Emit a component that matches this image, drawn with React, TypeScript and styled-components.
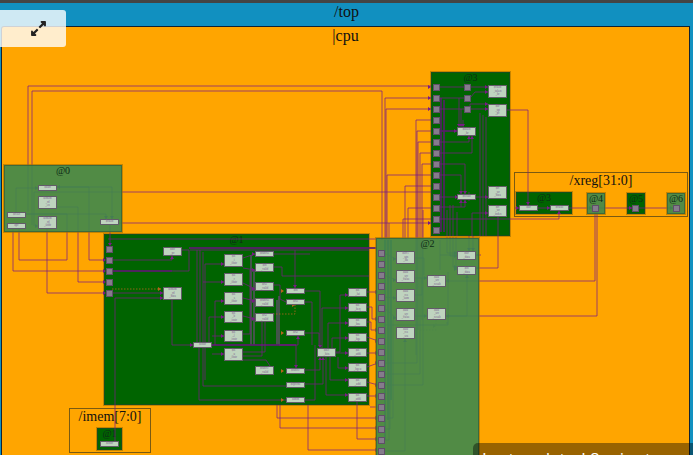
import { createGlobalStyle, styled } from 'styled-components';
import { FaExpandAlt } from 'react-icons/fa';

// page position of the orange panel's inside, diagram data below is in page pixels
const OX = 2;
const OY = 27;

const GlobalStyle = createGlobalStyle`
    html, body {
        margin: 0;
        height: 100%;
        overflow: hidden;
    }
    #root {
        height: 100%;
    }
`;

const Frame = styled.div`
    position: relative;
    display: flex;
    flex-direction: column;
    width: 693px;
    height: 455px;
    box-sizing: border-box;
    overflow: hidden;
    background: #1190c0;
    border-top: 3px solid #444;
    font-family: 'Liberation Serif', serif;
    color: #111;
`;

const TopTitle = styled.div`
    height: 23px;
    line-height: 18px;
    text-align: center;
    font-size: 16px;
`;

const Panel = styled.div`
    position: relative;
    flex: 1;
    margin: 0 3px 0 1px;
    background: #ffa500;
    border: 1px solid #123;
    border-bottom: none;
    border-radius: 3px 0 0 0;
    box-sizing: border-box;
`;

const CpuTitle = styled.div`
    text-align: center;
    font-size: 16px;
    line-height: 18px;
`;

const ExpandButton = styled.button`
    position: absolute;
    left: 0;
    top: 7px;
    width: 66px;
    height: 37px;
    padding: 0 0 0 10px;
    border: none;
    border-radius: 0 3px 3px 0;
    background: rgba(255, 255, 255, 0.8);
    color: #222;
    display: flex;
    align-items: center;
    justify-content: center;
    z-index: 9;
`;

const Toast = styled.div`
    position: absolute;
    left: 473px;
    top: 440px;
    width: 240px;
    height: 40px;
    padding: 6px 0 0 9px;
    box-sizing: border-box;
    border-radius: 5px 0 0 0;
    background: rgba(0, 0, 0, 0.4);
    color: #fff;
    font-family: 'Open Sans', sans-serif;
    font-size: 17px;
    line-height: 20px;
    white-space: nowrap;
    z-index: 9;
`;

const Wires = styled.svg<{ $z: number }>`
    position: absolute;
    left: ${-OX}px;
    top: ${-OY}px;
    z-index: ${(p) => p.$z};
    pointer-events: none;
`;

type Box = { $x: number; $y: number; $w: number; $h: number };

const Placed = styled.div<Box>`
    position: absolute;
    left: ${(p) => p.$x - OX}px;
    top: ${(p) => p.$y - OY}px;
    width: ${(p) => p.$w}px;
    height: ${(p) => p.$h}px;
    box-sizing: border-box;
`;

const Scope = styled(Placed)`
    border: 1.5px solid #7a5a12;
    text-align: center;
    font-size: 14px;
    line-height: 15px;
`;

const Stage = styled(Placed)<{ $light?: boolean }>`
    z-index: ${(p) => (p.$light ? 2 : 0)};
    background: ${(p) => (p.$light ? 'rgba(62, 136, 76, 0.9)' : '#006400')};
    border: 1px solid ${(p) => (p.$light ? '#3c6a3c' : '#14501c')};
    outline: 1px solid rgba(160, 110, 0, 0.6);
    text-align: center;
    font-size: 10px;
    line-height: 10px;
    color: #0d2a16;
`;

const Cell = styled(Placed)`
    z-index: 3;
    display: flex;
    align-items: center;
    justify-content: center;
    text-align: center;
    background: #bfd4bf;
    border: 1px solid #625c68;
    color: #7d5f8e;
    font-size: 3px;
    line-height: 3.4px;
    white-space: pre;
`;

const Port = styled(Placed)`
    z-index: 3;
    background: #857c8c;
    border: 1px solid #5f4f68;
`;

const stages: [string, number, number, number, number, boolean][] = [
    ['@1', 104, 234, 265, 171, false],
    ['@3', 431, 72, 79, 164, false],
    ['@3', 516, 192, 56, 22, false],
    ['@5', 627, 193, 18, 21, false],
    ['@1', 97, 428, 25, 22, false],
    ['@0', 4, 165, 118, 67, true],
    ['@2', 376, 238, 103, 230, true],
    ['@4', 587, 193, 18, 21, true],
    ['@6', 667, 193, 18, 21, true],
];

const cells: [string, number, number, number, number][] = [
    // @0
    ['$start', 38, 185, 19, 6],
    ['$imem\n_rd\n_en', 38, 196, 19, 13],
    ['$imem\n_rd\n_addr', 38, 216, 19, 13],
    ['$reset', 7, 212, 19, 6],
    ['$pc', 7, 223, 19, 6],
    ['$valid', 100, 219, 19, 6],
    // @1
    ['$inc\n_pc', 163, 247, 19, 9],
    ['$imem\n_rd\n_data', 163, 287, 19, 13],
    ['$is\n_i\n_instr', 224, 254, 19, 13],
    ['$is\n_r\n_instr', 224, 273, 19, 13],
    ['$is\n_s\n_instr', 224, 292, 19, 13],
    ['$is\n_b\n_instr', 224, 311, 19, 12],
    ['$is\n_j\n_instr', 224, 330, 19, 12],
    ['$is\n_u\n_instr', 224, 348, 19, 13],
    ['$funct3', 255, 251, 19, 6],
    ['$rd\n_valid', 255, 263, 19, 9],
    ['$rs1\n_valid', 255, 282, 19, 9],
    ['$funct3\n_valid', 255, 298, 19, 9],
    ['$rs2\n_valid', 255, 313, 19, 9],
    ['$funct7\n_valid', 255, 366, 19, 9],
    ['$rd', 286, 288, 19, 6],
    ['$rs1', 286, 299, 19, 6],
    ['$rs2', 286, 330, 19, 6],
    ['$funct7', 286, 368, 19, 6],
    ['$opcode', 286, 382, 19, 6],
    ['$imm', 286, 397, 19, 6],
    ['$instr', 193, 342, 19, 6],
    ['$dec\n_bits', 317, 348, 19, 9],
    ['$is\n_lui', 348, 288, 19, 9],
    ['$is\n_beq', 348, 303, 19, 9],
    ['$is\n_bne', 348, 318, 19, 9],
    ['$is\n_bge', 348, 333, 19, 9],
    ['$is\n_addi', 348, 348, 19, 9],
    ['$is\n_bgeu', 348, 363, 19, 9],
    ['$is\n_add', 348, 378, 19, 9],
    ['$is\n_addi', 348, 393, 19, 9],
    // @2
    ['$src1\n_sgn\n_ltu', 396, 251, 19, 13],
    ['$alu\n_src\n_value', 396, 270, 19, 13],
    ['$alu\n_res\n_sum', 396, 289, 19, 13],
    ['$alu\n_src\n_value', 396, 308, 19, 13],
    ['$alu\n_res\n_sra', 396, 327, 19, 12],
    ['$alu\n_src\n_result', 427, 275, 19, 12],
    ['$alu\n_src\n_result', 427, 308, 19, 12],
    ['$wr\n_data', 457, 251, 19, 9],
    ['$rd\n_data', 457, 266, 19, 9],
    // @3
    ['$valid\n_taken\n_br', 488, 85, 19, 13],
    ['$br\n_tgt\n_pc', 488, 104, 19, 13],
    ['$taken\n_br', 457, 127, 19, 9],
    ['$result', 457, 194, 19, 6],
    ['$rf\n_wr\n_data', 488, 186, 19, 13],
    ['$rf\n_wr\n_index', 488, 205, 19, 12],
    // xreg, imem
    ['$wr', 519, 205, 19, 6],
    ['$value', 550, 205, 19, 6],
    ['$instr', 100, 441, 19, 6],
];

const ports: [number, number][] = [
    ...[249, 260, 271, 282, 293].map((y): [number, number] => [109, y]),
    ...[87, 98, 109, 120, 131, 142, 153, 164, 175, 186, 197, 208, 219, 230].map(
        (y): [number, number] => [436, y],
    ),
    [467, 87],
    [467, 98],
    [467, 109],
    ...[253, 264, 275, 286, 297, 308, 319, 330, 341, 352, 363, 374, 385, 396, 407, 418, 429, 440, 451].map(
        (y): [number, number] => [381, y],
    ),
    [595, 208],
    [635, 208],
    [676, 208],
];

// heavy bundles
const buses = [
    '189,248 376,248',
    '193,345 296,345',
    '109,271 172,271',
    '436,131 457,131',
    '441,98 441,232',
    '444,100 444,232',
];

// the wide gray trunks inside @1 and @2
const trunks = [
    '251,255 251,345',
    '254,270 254,345',
    '277,300 277,345',
    '279,296 279,345',
    '385,240 385,440',
    '388,240 388,420',
    '391,240 391,400',
];

// undriven, dotted signals
const dotted = ['112,289 161,289', '273,314 295,314 295,305', '418,283 418,288', '420,330 437,330', '436,320 436,326'];

const lines = [
    // left block and the long runs over the top
    '28,212 28,86 431,86',
    '32,225 32,91 382,91 382,240',
    '16,212 16,188 38,188',
    '57,187 89,187 89,260 104,260',
    '34,226 34,192 431,192',
    '26,214 67,214 67,260 19,260 19,229',
    '13,229 13,271 104,271',
    '26,214 106,214 106,219',
    '47,229 47,293 104,293',
    '119,223 431,223',
    '57,187 112,187 112,219',
    '110,225 110,243',
    '108,239 376,239',
    '57,207 78,207 78,282 104,282',
    // @1 inputs
    '112,260 172,260 172,256',
    '172,271 189,271 189,250',
    '112,293 163,293',
    '115,298 163,298',
    '115,298 115,441',
    '172,300 172,345 193,345',
    '182,250 189,250',
    '190,250 369,250',
    '197,250 197,345',
    '200,250 200,345',
    '203,252 203,386 286,386',
    '205,264 224,264',
    '205,264 205,380',
    '203,282 224,282',
    '215,301 224,301',
    '215,301 215,345',
    '209,317 224,317',
    '209,317 209,345',
    '199,345 199,400 286,400',
    '212,354 224,354',
    '212,336 224,336',
    // @1 decoders
    '243,258 255,254',
    '243,268 255,270',
    '243,283 255,289',
    '243,298 255,301',
    '243,316 255,319',
    '243,334 250,334 250,270',
    '243,356 262,356 262,322',
    '243,352 265,352 265,322',
    '243,360 266,360 270,366',
    '274,254 310,254',
    '274,267 282,267 282,276 369,276',
    '274,285 280,285 280,299 286,302',
    '295,250 295,288',
    '279,345 298,345 298,336',
    '296,345 296,368',
    '305,333 319,333 319,345',
    '305,302 312,302 312,345',
    '305,291 320,291 320,345',
    '305,370 320,370 320,358',
    '305,384 323,384 323,358',
    '305,400 315,400 315,345',
    '336,352 340,352 340,295 348,295',
    '322,348 322,308 348,308',
    '328,348 328,323 348,323',
    '332,348 332,338 348,338',
    '336,353 348,353',
    '338,357 338,368 348,368',
    '330,357 330,380 348,380',
    '326,357 326,395 348,395',
    // @1 outputs to @2
    '367,292 376,292',
    '367,307 372,307 372,319 378,319',
    '367,322 371,322 371,330 378,330',
    '367,337 378,341',
    '367,353 378,353',
    '367,367 378,363',
    '367,382 378,385',
    '367,396 378,396',
    '370,407 378,407',
    '277,405 277,418 378,418',
    '280,405 280,428 378,428',
    '357,402 357,439 378,439',
    '308,405 308,450 378,450',
    // @3 to @2 and @1
    '431,98 385,98 385,240',
    '431,109 386,109 386,238',
    '431,120 416,120 416,355',
    '431,131 417,131 417,363 384,363',
    '431,142 418,142 418,330',
    '431,153 420,153 420,374 384,374',
    '431,164 422,164 422,320',
    '431,175 387,175 387,250',
    '431,186 405,186 405,238',
    '431,208 408,208 408,238',
    '423,210 423,385 384,385',
    '389,223 389,300',
    '431,219 403,219 403,238',
    // @2
    '384,253 396,259',
    '384,275 396,280',
    '384,297 396,298',
    '384,308 396,318',
    '384,418 393,418 393,320',
    '384,429 390,429 390,300',
    '384,440 389,440 389,320',
    '384,451 405,451 405,339',
    '384,325 448,325 448,272',
    '415,258 424,258 424,275',
    '415,278 427,278',
    '415,295 422,295 422,278',
    '415,316 427,316',
    '440,240 440,270',
    '446,316 467,316 467,275',
    '446,323 448,323',
    '447,237 447,253 457,253',
    '450,237 450,256 457,256',
    '453,237 453,267 457,267',
    '456,237 456,269 457,269',
    '440,255 457,255',
    '469,236 469,251',
    '473,236 473,251',
    '476,255 481,255',
    '476,268 498,268 498,217',
    // @3 insides
    '439,87 488,87',
    '439,98 470,98 475,92 488,92',
    '439,109 488,109',
    '470,109 470,104 488,104',
    '459,98 459,125',
    '461,109 461,125',
    '463,120 463,125',
    '439,142 469,142 469,136',
    '439,153 472,153 472,136',
    '439,164 465,164 465,194',
    '439,175 461,175 461,194',
    '439,197 458,197',
    '439,207 465,207 465,200',
    '461,200 461,207',
    '476,197 488,197',
    '472,213 488,213',
    '472,213 472,236',
    '480,113 480,236',
    '483,115 483,236',
    '486,117 486,236',
    '447,210 447,236',
    '450,205 450,236',
    '453,205 453,236',
    '457,212 457,236',
    '507,110 528,110 528,205',
    '438,219 559,219 559,211',
    // xreg
    '538,208 550,208',
    '569,208 595,208',
    '598,208 632,208',
    '638,208 673,208',
    '515,208 519,208',
    '595,211 595,281 446,281',
    '597,211 597,316 446,316',
    '469,201 469,192',
];

// each entry is [tip x, tip y, direction] for the small heads that enter a cell
const heads: [number, number, 'r' | 'l' | 'd' | 'u'][] = [
    [57, 187, 'l'],
    [38, 188, 'r'],
    [38, 226, 'r'],
    [47, 216, 'u'],
    [112, 219, 'd'],
    [106, 219, 'd'],
    [110, 246, 'd'],
    [106, 260, 'r'],
    [106, 271, 'r'],
    [106, 282, 'r'],
    [106, 293, 'r'],
    [172, 256, 'u'],
    [163, 293, 'r'],
    [163, 298, 'r'],
    [193, 345, 'r'],
    [224, 264, 'r'],
    [224, 282, 'r'],
    [224, 301, 'r'],
    [224, 317, 'r'],
    [224, 336, 'r'],
    [224, 354, 'r'],
    [255, 254, 'r'],
    [255, 270, 'r'],
    [255, 289, 'r'],
    [255, 301, 'r'],
    [255, 319, 'r'],
    [295, 288, 'd'],
    [296, 368, 'd'],
    [298, 336, 'u'],
    [320, 348, 'd'],
    [320, 357, 'u'],
    [323, 357, 'u'],
    [348, 295, 'r'],
    [348, 308, 'r'],
    [348, 323, 'r'],
    [348, 338, 'r'],
    [348, 353, 'r'],
    [348, 368, 'r'],
    [348, 380, 'r'],
    [348, 395, 'r'],
    [378, 292, 'r'],
    [378, 319, 'r'],
    [378, 330, 'r'],
    [378, 341, 'r'],
    [378, 353, 'r'],
    [378, 363, 'r'],
    [378, 385, 'r'],
    [378, 396, 'r'],
    [378, 418, 'r'],
    [378, 428, 'r'],
    [378, 439, 'r'],
    [378, 450, 'r'],
    [396, 259, 'r'],
    [396, 280, 'r'],
    [396, 298, 'r'],
    [396, 318, 'r'],
    [405, 339, 'u'],
    [427, 278, 'r'],
    [427, 316, 'r'],
    [446, 281, 'l'],
    [446, 316, 'l'],
    [457, 253, 'r'],
    [457, 256, 'r'],
    [457, 267, 'r'],
    [457, 269, 'r'],
    [469, 251, 'd'],
    [473, 251, 'd'],
    [476, 255, 'l'],
    [476, 268, 'l'],
    [467, 275, 'u'],
    [431, 87, 'r'],
    [431, 98, 'r'],
    [431, 109, 'r'],
    [431, 223, 'r'],
    [488, 87, 'r'],
    [488, 92, 'r'],
    [488, 104, 'r'],
    [488, 109, 'r'],
    [459, 127, 'd'],
    [461, 127, 'd'],
    [463, 127, 'd'],
    [457, 131, 'r'],
    [469, 136, 'u'],
    [472, 136, 'u'],
    [461, 194, 'd'],
    [465, 194, 'd'],
    [461, 200, 'u'],
    [465, 200, 'u'],
    [458, 197, 'r'],
    [488, 197, 'r'],
    [488, 213, 'r'],
    [528, 205, 'd'],
    [559, 211, 'u'],
    [519, 208, 'r'],
    [550, 208, 'r'],
    [592, 208, 'r'],
    [632, 208, 'r'],
    [673, 208, 'r'],
];

// the little brown stubs on cells whose input is not driven
const stubs: [number, number][] = [
    [161, 289],
    [284, 291],
    [284, 333],
    [284, 371],
    [284, 400],
    [295, 305],
    [424, 285],
    [436, 326],
];

const headPoints = (x: number, y: number, dir: string) => {
    if (dir === 'r') return `${x},${y} ${x - 3},${y - 2} ${x - 3},${y + 2}`;
    if (dir === 'l') return `${x},${y} ${x + 3},${y - 2} ${x + 3},${y + 2}`;
    if (dir === 'd') return `${x},${y} ${x - 2},${y - 3} ${x + 2},${y - 3}`;
    return `${x},${y} ${x - 2},${y + 3} ${x + 2},${y + 3}`;
};

export default function App() {
    return (
        <Frame>
            <GlobalStyle />
            <TopTitle>/top</TopTitle>
            <ExpandButton aria-label="expand">
                <FaExpandAlt size={17} />
            </ExpandButton>
            <Panel>
                <CpuTitle>|cpu</CpuTitle>
                <Scope $x={514} $y={172} $w={174} $h={45}>
                    /xreg[31:0]
                </Scope>
                <Scope $x={69} $y={408} $w={82} $h={45}>
                    /imem[7:0]
                </Scope>
                {stages.map(([label, x, y, w, h, light], i) => (
                    <Stage key={i} $x={x} $y={y} $w={w} $h={h} $light={light}>
                        {label}
                    </Stage>
                ))}
                <Wires $z={1} width={693} height={455} viewBox="0 0 693 455" fill="none">
                    {trunks.map((points, i) => (
                        <polyline key={i} points={points} stroke="#54505c" strokeWidth="2" opacity="0.8" />
                    ))}
                    {buses.map((points, i) => (
                        <polyline key={i} points={points} stroke="#5c1a6e" strokeWidth="1.8" opacity="0.85" />
                    ))}
                    {lines.map((points, i) => (
                        <polyline key={i} points={points} stroke="#7a1a86" strokeWidth="1" opacity="0.72" />
                    ))}
                    {dotted.map((points, i) => (
                        <polyline key={i} points={points} stroke="#b5651d" strokeWidth="0.8" strokeDasharray="1.5 1.5" />
                    ))}
                    {stubs.map(([x, y], i) => (
                        <polygon key={i} points={headPoints(x, y, 'r')} fill="#b5651d" />
                    ))}
                    {heads.map(([x, y, dir], i) => (
                        <polygon key={i} points={headPoints(x, y, dir)} fill="#7a1a86" />
                    ))}
                </Wires>
                {cells.map(([label, x, y, w, h], i) => (
                    <Cell key={i} $x={x} $y={y} $w={w} $h={h}>
                        {label}
                    </Cell>
                ))}
                {ports.map(([x, y], i) => (
                    <Port key={i} $x={x - 3.5} $y={y - 3.5} $w={7} $h={7} />
                ))}
            </Panel>
            <Toast>Last updated 8 minutes ago</Toast>
        </Frame>
    );
}
